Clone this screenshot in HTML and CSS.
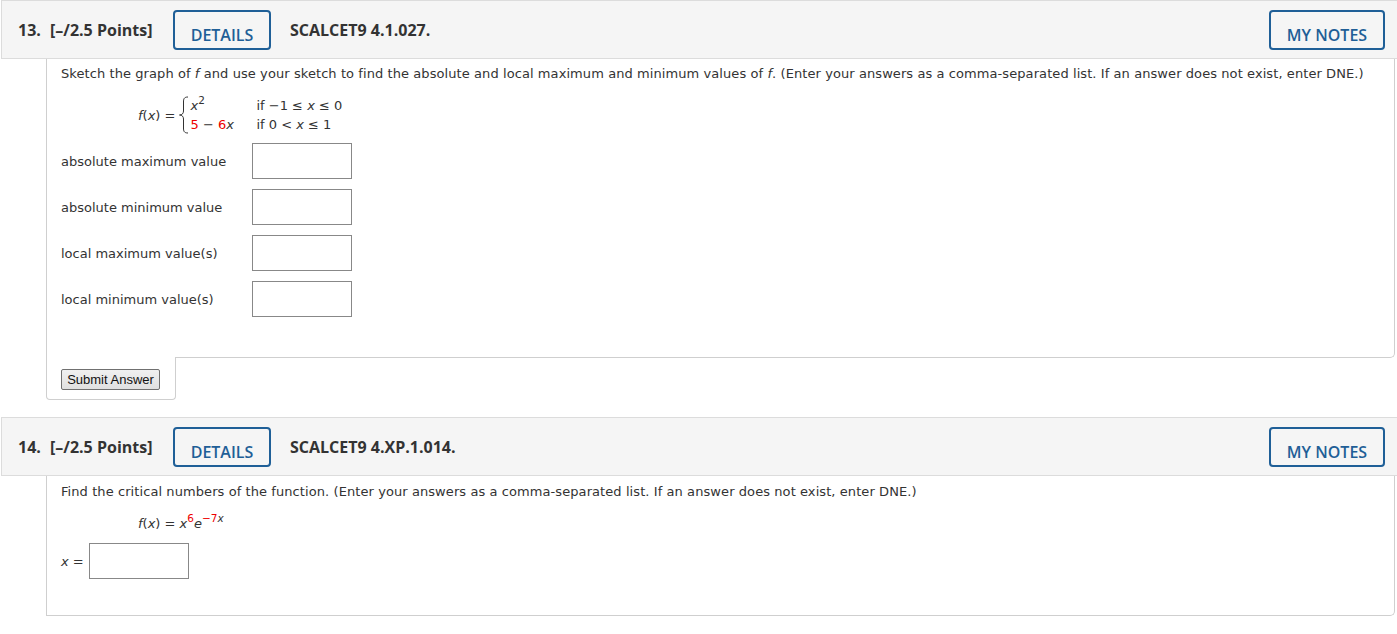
FILE: index.html
```html
<!DOCTYPE html>
<html>
<head>
<meta charset="utf-8">
<link rel="stylesheet" href="styles.css">
</head>
<body>
<div class="page">

  <section class="question">
    <div class="qhead">
      <span class="qnum">13.</span>
      <span class="qpts">[–/2.5 Points]</span>
      <span class="btn details">DETAILS</span>
      <span class="qcode">SCALCET9 4.1.027.</span>
      <span class="spacer"></span>
      <span class="btn notes">MY NOTES</span>
    </div>
    <div class="qbody first">
      <p class="prompt">Sketch the graph of <i>f</i> and use your sketch to find the absolute and local maximum and minimum values of <i>f</i>. (Enter your answers as a comma-separated list. If an answer does not exist, enter DNE.)</p>
      <div class="formula">
        <span class="fx"><i>f</i>(<i>x</i>) = </span>
        <svg class="brace" width="12" height="38" viewBox="0 0 12 38">
          <path d="M10 1 C6 1 5.5 3 5.5 6 L5.5 15 C5.5 17.5 4 19 1.5 19 C4 19 5.5 20.5 5.5 23 L5.5 32 C5.5 35 6 37 10 37" fill="none" stroke="#333" stroke-width="1"/>
        </svg>
        <div class="cases">
          <span class="c1"><i>x</i><sup>2</sup></span>
          <span class="c2">if −1 ≤ <i>x</i> ≤ 0</span>
          <span class="c1"><span class="red">5</span> − <span class="red">6</span><i>x</i></span>
          <span class="c2">if 0 &lt; <i>x</i> ≤ 1</span>
        </div>
      </div>
      <div class="answers">
        <label>absolute maximum value</label><span class="box"></span>
        <label>absolute minimum value</label><span class="box"></span>
        <label>local maximum value(s)</label><span class="box"></span>
        <label>local minimum value(s)</label><span class="box"></span>
      </div>
    </div>
    <div class="tab"><span class="submit">Submit Answer</span></div>
  </section>

  <section class="question second">
    <div class="qhead">
      <span class="qnum">14.</span>
      <span class="qpts">[–/2.5 Points]</span>
      <span class="btn details">DETAILS</span>
      <span class="qcode">SCALCET9 4.XP.1.014.</span>
      <span class="spacer"></span>
      <span class="btn notes">MY NOTES</span>
    </div>
    <div class="qbody last">
      <p class="prompt">Find the critical numbers of the function. (Enter your answers as a comma-separated list. If an answer does not exist, enter DNE.)</p>
      <div class="formula single">
        <span class="fx"><i>f</i>(<i>x</i>) = <i>x</i><sup class="red">6</sup><i>e</i><sup><span class="red">−7</span><i>x</i></sup></span>
      </div>
      <div class="xrow">
        <span class="xlab"><i>x</i> = </span><span class="box"></span>
      </div>
    </div>
  </section>

</div>
</body>
</html>
```

FILE: styles.css
```css
html, body {
  margin: 0;
  padding: 0;
  background: #fff;
  overflow: hidden;
}
.page {
  width: 1397px;
  padding-left: 1px;
  box-sizing: border-box;
}
.question.second {
  margin-top: 17px;
}
.qhead {
  display: flex;
  align-items: center;
  height: 57px;
  background: #f5f5f5;
  border: 1px solid #dcdcdc;
  border-right: none;
  padding-left: 16px;
  font-family: "Open Sans", sans-serif;
  font-weight: 700;
  font-size: 16px;
  color: #333;
}
.qnum {
  width: 32px;
}
.qpts {
  width: 123px;
}
.btn {
  box-sizing: border-box;
  display: flex;
  align-items: flex-end;
  justify-content: center;
  height: 40px;
  border: 2px solid #1f5f97;
  border-radius: 4px;
  padding-bottom: 2px;
  color: #1f5f97;
  font-weight: 600;
  font-size: 16px;
}
.details {
  width: 98px;
  margin-right: 19px;
}
.notes {
  width: 116px;
  margin-right: 12px;
}
.spacer {
  flex: 1;
}
.qbody {
  margin-left: 45px;
  width: 1349px;
  box-sizing: border-box;
  border: 1px solid #cfcfcf;
  border-top: none;
  border-bottom-right-radius: 5px;
  padding: 7px 15px 40px 14px;
  font-family: "DejaVu Sans", Verdana, sans-serif;
  font-size: 13px;
  color: #333;
}
.qbody.last {
  padding-top: 8px;
  padding-bottom: 36px;
}
.prompt {
  margin: 0;
  line-height: 16px;
  letter-spacing: 0.08px;
}
.formula {
  display: flex;
  align-items: center;
  margin: 14px 0 9px 77px;
  height: 38px;
}
.formula.single {
  height: 19px;
  margin: 14px 0 10px 77px;
}
.fx {
  line-height: 19px;
}
.brace {
  margin: 0 0 0 3px;
}
.cases {
  display: grid;
  grid-template-columns: 66px auto;
  grid-auto-rows: 19px;
  line-height: 19px;
}
sup {
  font-size: 10.5px;
  line-height: 0;
  vertical-align: 6px;
}
.red {
  color: #e00;
}
.answers {
  display: grid;
  grid-template-columns: 191px 100px;
  grid-auto-rows: 36px;
  row-gap: 10px;
  align-items: center;
}
.box {
  display: block;
  box-sizing: border-box;
  width: 100px;
  height: 36px;
  border: 1px solid #888;
  background: #fff;
}
.xrow {
  display: flex;
  align-items: center;
}
.xlab {
  width: 28px;
}
.tab {
  margin-left: 45px;
  margin-top: -1px;
  width: 130px;
  box-sizing: border-box;
  background: #fff;
  border: 1px solid #cfcfcf;
  border-top: none;
  border-radius: 0 0 4px 4px;
  padding: 12px 14px 9px;
  position: relative;
}
.submit {
  display: flex;
  align-items: center;
  justify-content: center;
  box-sizing: border-box;
  width: 99px;
  height: 21px;
  border: 1px solid #707070;
  border-radius: 2px;
  background: linear-gradient(#f0f0f0, #e0e0e0);
  font-family: "Liberation Sans", Arial, sans-serif;
  font-size: 13px;
  color: #111;
}
```
